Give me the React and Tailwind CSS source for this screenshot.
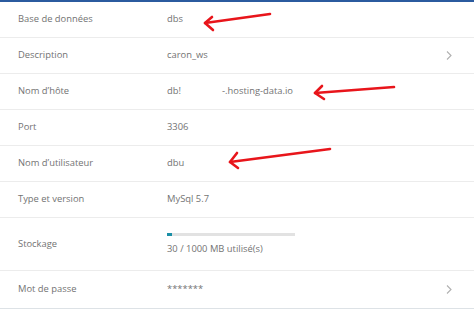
const Chevron = () => (
  <svg width="8" height="11" viewBox="0 0 8 11" className="absolute right-[21px]">
    <path d="M2 1.5 L6 5.5 L2 9.5" fill="none" stroke="#b0b0b0" strokeWidth="1.1" />
  </svg>
);

const Row = ({ label, children, chevron, height = "h-[36px]", last }) => (
  <div
    className={`relative flex items-center ${height} ${
      last ? "" : "border-b border-[#ececec]"
    }`}
  >
    <div className="w-[167px] pl-[18px] text-[#737373]">{label}</div>
    <div className="flex-1 text-[#737373]">{children}</div>
    {chevron && <Chevron />}
  </div>
);

const Arrow = ({ tail, tip, up, down }) => (
  <g stroke="#e8151b" strokeWidth="2.6" strokeLinecap="round" fill="none">
    <line x1={tail[0]} y1={tail[1]} x2={tip[0]} y2={tip[1]} />
    <polyline points={`${up[0]},${up[1]} ${tip[0]},${tip[1]} ${down[0]},${down[1]}`} strokeLinejoin="round" />
  </g>
);

export default function App() {
  return (
    <div
      className="relative w-[474px] h-[309px] bg-white overflow-hidden text-[9.4px]"
      style={{ fontFamily: '"Open Sans", "Liberation Sans", sans-serif' }}
    >
      <div className="h-[2px] bg-[#2b5b9f]" />
      <Row label="Base de données">dbs</Row>
      <Row label="Description" chevron>caron_ws</Row>
      <Row label="Nom d’hôte">
        <div className="flex">
          <span className="w-[55px]">db!</span>
          <span>‐.hosting-data.io</span>
        </div>
      </Row>
      <Row label="Port">3306</Row>
      <Row label="Nom d’utilisateur">dbu</Row>
      <Row label="Type et version">MySql 5.7</Row>
      <Row label="Stockage" height="h-[53px]">
        <div className="flex flex-col gap-[6px] pt-[1px]">
          <div className="w-[128px] h-[3px] bg-[#e2e2e2]">
            <div className="w-[5px] h-[3px] bg-[#1b8fa6]" />
          </div>
          <span>30 / 1000 MB utilisé(s)</span>
        </div>
      </Row>
      <Row label="Mot de passe" height="h-[37px]" chevron last>
        *******
      </Row>
      <div className="h-[2px] bg-[#dde2e6]" />

      <svg className="absolute inset-0 pointer-events-none" width="474" height="309">
        <Arrow tail={[270, 14]} tip={[205, 23]} up={[212, 17]} down={[213, 30]} />
        <Arrow tail={[394, 87]} tip={[315, 93]} up={[322, 86]} down={[324, 99]} />
        <Arrow tail={[330, 149]} tip={[230, 162]} up={[237, 153]} down={[238, 168]} />
      </svg>
    </div>
  );
}
